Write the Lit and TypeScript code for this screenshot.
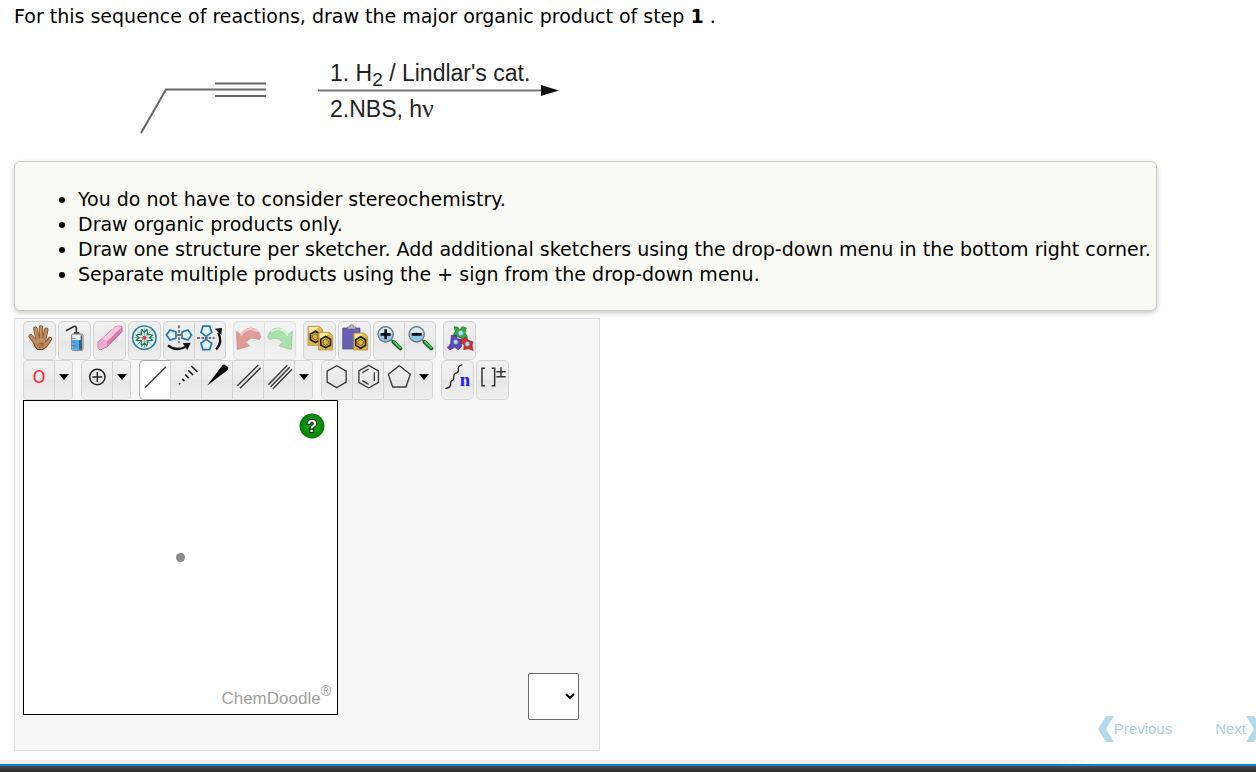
import { LitElement, html, svg, css } from "lit";
import { customElement, property } from "lit/decorators.js";

const S = "#3c3c3c";
const poly = (cx: number, cy: number, r: number, n: number, turn = 0) =>
  Array.from({ length: n }, (_, i) => {
    const a = ((i * 360) / n - 90 + turn) * (Math.PI / 180);
    return `${(cx + r * Math.cos(a)).toFixed(1)},${(cy + r * Math.sin(a)).toFixed(1)}`;
  }).join(" ");

const page = (x: number, y: number, w: number, h: number) => svg`
  <path d="M${x} ${y}h${w - 10}l10 10v${h - 10}h-${w}z" fill="#dcb84c" stroke="#a8862c" stroke-width="2"/>
  <path d="M${x + 2} ${y + 2}h${w - 14}l-${w - 18} ${h / 2}z" fill="#fff3b0" opacity=".8"/>
  <polygon points=${poly(x + w / 2, y + h / 2 + 3, 17, 6)} fill="none" stroke="#221a00" stroke-width="5"/>
  <polygon points=${poly(x + w / 2, y + h / 2 + 3, 9, 6)} fill="none" stroke="#4a3a00" stroke-width="2"/>`;

const lens = (plus: boolean) => svg`
  <path d="M48 47l10 10" stroke="#777" stroke-width="6"/>
  <path d="M56 54L76 73" stroke="#145c1c" stroke-width="12" stroke-linecap="round"/>
  <path d="M57 53L76 71" stroke="#4dc25a" stroke-width="6" stroke-linecap="round"/>
  <circle cx="32" cy="31" r="23" fill="#8cc9ee" stroke="#777" stroke-width="4"/>
  <path d="M13 30a19 19 0 0 1 38 0q-18-10-38 0z" fill="#d4eefb"/>
  <path d=${plus ? "M17 31h30M32 16v30" : "M17 31h30"} stroke="#0a0a0a" stroke-width="8"/>`;

const dashes = [0, 1, 2, 3, 4].map((i) => {
  const x = 23 + i * 11, y = 62 - i * 11, d = 1.5 + i * 1.9;
  return svg`<path d="M${x - d} ${y - d}L${x + d} ${y + d}" stroke="#111" stroke-width="4.5"/>`;
});

const icons: Record<string, unknown> = {
  hand: svg`
    <g stroke-linecap="round" fill="none">
      <path d="M14 37L31 57M28 14L36 50M45 10V50M61 17L53 52M72 45L57 66" stroke="#6b4426" stroke-width="13"/>
      <path d="M28 42H57L62 60Q57 77 48 77H35Q28 72 22 56Z" fill="#b88355" stroke="#6b4426" stroke-width="3"/>
      <path d="M14 37L31 57M28 14L36 50M45 10V50M61 17L53 52M72 45L57 66" stroke="#c08c5f" stroke-width="9"/>
      <path d="M36 61q8-6 16-2M40 71q4-9 13-12" stroke="#7b4d2c" stroke-width="2"/>
    </g>`,
  bottle: svg`
    <path d="M15 20L37 8Q46 4 46 14V24" fill="none" stroke="#333" stroke-width="5"/>
    <path d="M39 24h16v8H39z" fill="#444"/>
    <path d="M32 34q0-4 5-4h24q5 0 5 4v42q0 3-5 3H37q-5 0-5-3z" fill="#e7edf0" stroke="#777" stroke-width="3"/>
    <path d="M34 48h29v29H34z" fill="#4aa5df"/><path d="M54 48h9v29h-9z" fill="#1c70b2"/>
    <path d="M61 34v42" stroke="#555" stroke-width="4"/>
    <path d="M33 43h11M33 54h8M33 65h11" stroke="#456" stroke-width="2"/>`,
  eraser: svg`
    <path d="M6 54L18 44 58 8Q68 4 78 8L79 22 34 68 12 78 6 72z" fill="#eb8fbd" stroke="#a95582" stroke-width="2"/>
    <path d="M18 44L58 8Q68 5 77 9L33 52z" fill="#fac5df"/>
    <path d="M33 53L78 11V23L34 68z" fill="#d87aaa"/>
    <path d="M7 55L18 45 33 53 33 67 12 77 7 71z" fill="#f2abce"/>`,
  snow: svg`
    <circle cx="40" cy="41" r="35" fill="#eef6f6" stroke="#2882ae" stroke-width="5"/>
    <path d="M40 11V71M10 41H70M19 20L61 62M61 20L19 62" stroke="#2e8a8a" stroke-width="2"/>
    <path d="M31 15l9 10 9-10M31 67l9-10 9 10M14 32l10 9-10 9M66 32l-10 9 10 9M31 19v13H18M49 19v13h13M31 63V50H18M49 63V50h13" fill="none" stroke="#26764f" stroke-width="4"/>
    <circle cx="40" cy="41" r="6" fill="#e33a3f"/>`,
  flipH: svg`
    <g fill="#e8f3fb" stroke="#1f76b6" stroke-width="5"><polygon points=${poly(20, 33, 16, 5, -90)}/><polygon points=${poly(64, 33, 16, 5, 90)}/></g>
    <path d="M42 4v9M42 18v8M42 40v8M42 52v6M36 33h12" stroke="#444" stroke-width="4"/>
    <path d="M9 64Q32 83 61 69" fill="none" stroke="#111" stroke-width="7"/><path d="M53 58L77 56 67 78z" fill="#111"/>`,
  flipV: svg`
    <g fill="#e8f3fb" stroke="#1f76b6" stroke-width="5"><polygon points=${poly(31, 20, 17, 5, 180)}/><polygon points=${poly(31, 63, 17, 5)}/></g>
    <path d="M3 42h9M16 42h8M27 42h8M38 42h8M50 42h6" stroke="#444" stroke-width="4"/>
    <path d="M60 76Q81 56 67 26" fill="none" stroke="#111" stroke-width="7"/><path d="M56 14L78 12 76 33z" fill="#111"/>`,
  undo: svg`<path d="M4 22L7 77 44 65 32 56Q46 36 73 47L77 41C76 15 42-3 17 31Z" fill="#d05f59" stroke="#a94442" stroke-width="2"/><path d="M17 35Q38 3 68 23" fill="none" stroke="#eea5a1" stroke-width="6"/>`,
  redo: svg`<path d="M79 22L76 77 39 65 51 56Q37 36 10 47L6 41C7 15 41-3 66 31Z" fill="#78d278" stroke="#4e9c52" stroke-width="2"/><path d="M66 35Q45 3 15 23" fill="none" stroke="#bdf0bd" stroke-width="6"/>`,
  copy: svg`${page(6, 7, 44, 57)}${page(38, 25, 42, 53)}`,
  paste: svg`
    <path d="M5 12h52v63H5z" fill="#6a5db4" stroke="#4c4386" stroke-width="2"/>
    <path d="M19 15V9h7q0-7 6-7t6 7h7v6z" fill="#b9b9c0" stroke="#666" stroke-width="2"/>${page(38, 27, 42, 51)}`,
  zoomIn: lens(true),
  zoomOut: lens(false),
  templates: svg`
    <path d="M24 8l12 2 5 8 8-10 12 4-4 14 8 14-16 4-14-6-13-6 6-10z" fill="#35ad35" stroke="#1e6b25" stroke-width="2"/>
    <path d="M16 34l14 0 4 10 12 2 0 22-9 9-11-7-14 8-8-7 10-12z" fill="#6247b3" stroke="#3e2b80" stroke-width="2"/>
    <path d="M47 47l14-7 6 9 13 4-2 12 3 14-14-5-14 3 2-14-10-6z" fill="#dc2f35" stroke="#8e171b" stroke-width="2"/>
    <g fill="#a4e3f8" stroke="#568aa6" stroke-width="2"><circle cx="44" cy="27" r="8"/><circle cx="29" cy="54" r="7"/><circle cx="64" cy="60" r="7"/></g>`,
  plus: svg`<g fill="none" stroke="#222" stroke-width="4.5"><circle cx="43" cy="42" r="23"/><path d="M28 42h30M43 27v30"/></g>`,
  single: svg`<path d="M12 74L75 11" stroke=${S} stroke-width="4.5"/>`,
  recessed: dashes,
  wedge: svg`<path d="M12 68L58 7Q64 3 66 6L76 13 75 20Z" fill="#050505"/>`,
  double: svg`<path d="M10 68L73 6M18 76L80 14" stroke=${S} stroke-width="4.5"/>`,
  triple: svg`<path d="M10 65L67 7M17 71L74 13M24 77L81 19" stroke=${S} stroke-width="4.5"/>`,
  hexagon: svg`<polygon points=${poly(41, 41, 33, 6)} fill="none" stroke=${S} stroke-width="4"/>`,
  benzene: svg`<polygon points=${poly(44, 41, 34, 6)} fill="none" stroke=${S} stroke-width="4"/><path d="M25 29L44 18M25 53L44 64M61 28V54" stroke=${S} stroke-width="4"/>`,
  pentagon: svg`<polygon points="43,8 76,34 63,72 23,72 10,34" fill="none" stroke=${S} stroke-width="4"/>`,
  chain: svg`<path d="M55 5Q40 9 43 20Q45 29 34 31Q29 34 29 44Q30 52 22 54Q18 58 20 66Q18 75 4 76" fill="none" stroke="#222" stroke-width="4"/><text x="47" y="69" font-family="Liberation Serif, serif" font-weight="700" font-size="56" fill="#1a1aff">n</text>`,
  bracket: svg`<path d="M18 16H9V68H18M38 16H47V68H38M52 26H80M66 13V39M52 41H80" fill="none" stroke="#333" stroke-width="4.5"/>`,
};

interface Tool { icon: string; label: string; on?: boolean }
type Group = Tool[];

const t = (icon: string, label: string, on = false): Tool => ({ icon, label, on });

const topRow: Group[][] = [
  [[t("hand", "Move")], [t("bottle", "Clear")], [t("eraser", "Erase")], [t("snow", "Center")], [t("flipH", "Flip horizontally"), t("flipV", "Flip vertically")]],
  [[t("undo", "Undo"), t("redo", "Redo")]],
  [[t("copy", "Copy")], [t("paste", "Paste")], [t("zoomIn", "Zoom in"), t("zoomOut", "Zoom out")]],
  [[t("templates", "Templates")]],
];
const bottomRow: Group[][] = [
  [[t("oxygen", "Oxygen"), t("more", "More elements")]],
  [[t("plus", "Increase charge"), t("more", "More attributes")]],
  [[t("single", "Single bond", true), t("recessed", "Recessed bond"), t("wedge", "Protruding bond"), t("double", "Double bond"), t("triple", "Triple bond"), t("more", "More bonds")]],
  [[t("hexagon", "Cyclohexane"), t("benzene", "Benzene"), t("pentagon", "Cyclopentane"), t("more", "More rings")]],
  [[t("chain", "Carbon chain")], [t("bracket", "Brackets")]],
];

@customElement("sketch-toolbar")
class SketchToolbar extends LitElement {
  @property({ attribute: false }) clusters: Group[][] = [];

  static styles = css`
    :host { display: flex; gap: 8px; }
    :host([compact]) { gap: 7px; }
    .cluster { display: flex; gap: 2px; }
    .group { display: flex; }
    button {
      box-sizing: border-box; width: 31px; height: 40px; margin: 0; padding: 0 0 7px;
      display: flex; align-items: center; justify-content: center; overflow: hidden;
      border: 1px solid #d3d3d3; border-left-width: 0; border-radius: 0;
      background: linear-gradient(#f1f1f1, #ebebeb 50%, #e6e6e6 50%, #f0f0f0);
      font: 19px Roboto, sans-serif; color: #ff2626;
    }
    :host([compact]) button { height: 39px; padding-bottom: 5px; }
    button:first-child { width: 32px; border-left-width: 1px; border-radius: 5px 0 0 5px; }
    button:last-child { border-radius: 0 5px 5px 0; }
    button:only-child { width: 33px; border-radius: 5px; }
    button.more { width: 18px; }
    button.on { background: #fff; border-color: #aaa; border-right-color: #d3d3d3; }
    button:disabled { opacity: 0.6; }
    svg { flex: none; display: block; }
  `;

  face(icon: string) {
    if (icon === "oxygen") return "O";
    if (icon === "more") return html`<svg width="10" height="6" viewBox="0 0 10 6"><path d="M0 0h10L5 6z" fill="#000"/></svg>`;
    return html`<svg width="28" height="28" viewBox="0 0 84 84">${icons[icon]}</svg>`;
  }

  render() {
    return this.clusters.map((c) => html`<div class="cluster">${c.map((g) => html`
      <div class="group">${g.map((b) => html`<button
        class="${b.icon === "more" ? "more" : ""} ${b.on ? "on" : ""}" aria-label=${b.label}
        ?disabled=${b.icon === "undo" || b.icon === "redo"}>${this.face(b.icon)}</button>`)}</div>`)}</div>`);
  }
}

@customElement("app-root")
class AppRoot extends LitElement {
  static styles = css`
    :host {
      display: flex; flex-direction: column; min-height: 100vh; overflow: hidden;
      font: 19px/25px "DejaVu Sans", sans-serif; color: #000; background: #fff;
    }
    main { flex: 1; padding: 4px 0 0 14px; }
    p { margin: 0; }
    .scheme { display: block; margin: 21px 0 21px 116px; }
    .notes {
      box-sizing: border-box; width: fit-content; padding: 25px 5px 23px 23px;
      border: 1px solid #c9c9c9; border-radius: 6px; background: #f9faf3;
      box-shadow: 0 2px 5px rgba(0, 0, 0, 0.22);
    }
    ul { margin: 0; padding-left: 40px; }
    .row { display: flex; justify-content: space-between; align-items: flex-end; margin-top: 7px; }
    .panel {
      box-sizing: border-box; flex: 0 1 586px; padding: 2px 20px 30px 8px;
      border: 1px solid #dedede; background: #f7f7f7;
    }
    .work { display: flex; justify-content: space-between; align-items: flex-end; }
    .canvas {
      box-sizing: border-box; width: 315px; height: 315px; margin-bottom: 5px; padding: 12px 6px 2px 12px;
      border: 1px solid #000; background: #fff;
      display: grid; grid-template-rows: 26px 1fr 26px; justify-items: end;
    }
    .help { width: 26px; height: 26px; padding: 0; border: 0; background: none; margin-right: 6px; }
    .help svg, .dot { display: block; }
    .dot { place-self: center; width: 9px; height: 9px; margin: 0 6px 10px 0; border-radius: 50%; background: #8c8c8c; }
    .brand { font: 17px/26px "Liberation Sans", sans-serif; color: #a0a0a0; }
    .brand sup { font-size: 14px; line-height: 0; vertical-align: 8px; }
    select {
      width: 51px; height: 47px; padding-right: 3px; border: 1px solid #6b6b6b; border-radius: 2px;
      background: #fff; color: #000; font: 19px "DejaVu Sans", sans-serif;
    }
    nav { display: flex; gap: 43px; margin-bottom: 9px; font: 15px/26px "Liberation Sans", sans-serif; }
    nav a { display: flex; color: #a9cfe4; text-decoration: none; }
    nav svg { display: block; }
    .cut { width: 10px; overflow: hidden; }
    footer {
      height: 12px; margin-top: 9px;
      background:
        linear-gradient(#0c88c8, #0c88c8) 0 4px / 100% 2px no-repeat,
        linear-gradient(#4a4a4a, #2c2c2c) 0 6px / 100% 6px no-repeat,
        linear-gradient(90deg, #efefef 84%, #fff 88%);
    }
  `;

  render() {
    return html`
      <main>
        <p>For this sequence of reactions, draw the major organic product of step <b>1</b> .</p>
        <svg class="scheme" width="440" height="90" viewBox="130 50 440 90" font-family="Liberation Sans, sans-serif" font-size="23" fill="#222">
          <path d="M141 133L166 89.5H266M215 83.5H266M215 96H266" fill="none" stroke="#666" stroke-width="2"/>
          <text x="330" y="81">1. H<tspan font-size="19" dy="5">2</tspan><tspan dy="-5"> / Lindlar's cat.</tspan></text>
          <path d="M318 90.5H545" stroke="#777" stroke-width="2"/><path d="M541 85L559 90.5 541 96z" fill="#111"/>
          <text x="330" y="117">2.NBS, h<tspan font-family="Liberation Serif, serif" font-size="26">ν</tspan></text>
        </svg>
        <section class="notes">
          <ul>
            <li>You do not have to consider stereochemistry.</li>
            <li>Draw organic products only.</li>
            <li>Draw one structure per sketcher. Add additional sketchers using the drop-down menu in the bottom right corner.</li>
            <li>Separate multiple products using the + sign from the drop-down menu.</li>
          </ul>
        </section>
        <div class="row">
          <section class="panel">
            <sketch-toolbar compact .clusters=${topRow}></sketch-toolbar>
            <sketch-toolbar .clusters=${bottomRow}></sketch-toolbar>
            <div class="work">
              <div class="canvas">
                <button class="help" aria-label="Help">
                  <svg width="26" height="26" viewBox="0 0 26 26">
                    <defs><radialGradient id="g"><stop offset="0" stop-color="#00c400"/><stop offset="1" stop-color="#087808"/></radialGradient></defs>
                    <circle cx="13" cy="13" r="12.5" fill="url(#g)"/>
                    <text x="13" y="18.5" text-anchor="middle" font-family="Liberation Sans, sans-serif" font-weight="700" font-size="17" fill="#fff" stroke="#000" stroke-width="2" paint-order="stroke">?</text>
                  </svg>
                </button>
                <span class="dot"></span>
                <span class="brand">ChemDoodle<sup>®</sup></span>
              </div>
              <select aria-label="Add sketcher"><option></option></select>
            </div>
          </section>
          <nav>
            <a href="#previous"><svg width="16" height="26" viewBox="0 0 16 26"><path d="M8 0H16L8 13 16 26H8L0 13z" fill="#b3d9ec"/></svg>Previous</a>
            <a href="#next">Next<span class="cut"><svg width="16" height="26" viewBox="0 0 16 26"><path d="M8 0H0L8 13 0 26H8L16 13z" fill="#b3d9ec"/></svg></span></a>
          </nav>
        </div>
      </main>
      <footer></footer>`;
  }
}
